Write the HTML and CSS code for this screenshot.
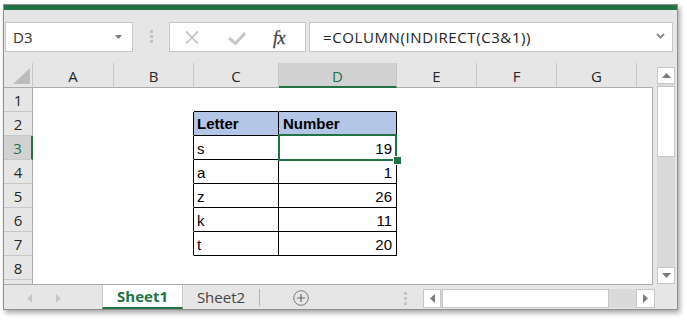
FILE: index.html
```html
<!DOCTYPE html>
<html>
<head>
<meta charset="utf-8">
<title>Excel COLUMN INDIRECT</title>
<link rel="stylesheet" href="styles.css">
</head>
<body>
<div class="window">
  <div class="topbar"></div>
  <div class="fbar">
    <div class="namebox">
      <span class="nb-text">D3</span>
      <svg class="nb-arrow" width="7" height="4" viewBox="0 0 7 4"><path d="M0 0H7L3.5 4Z" fill="#7a7a7a"/></svg>
    </div>
    <div class="grip"><i></i><i></i><i></i></div>
    <div class="fxbtns">
      <svg class="ic-x" width="14" height="13" viewBox="0 0 14 13"><path d="M1 0.5L13 12.5M13 0.5L1 12.5" stroke="#bdbdbd" stroke-width="1.6" fill="none"/></svg>
      <svg class="ic-check" width="18" height="13" viewBox="0 0 18 13"><path d="M1 6L7.5 11.5L17 1" stroke="#c8c8c8" stroke-width="3" fill="none"/></svg>
      <span class="fx">fx</span>
    </div>
    <div class="finput">
      <span class="ftext">=COLUMN(INDIRECT(C3&amp;1))</span>
      <svg class="f-chev" width="9" height="6" viewBox="0 0 9 6"><path d="M1 1L4.5 4.5L8 1" stroke="#8a8a8a" stroke-width="2" fill="none"/></svg>
    </div>
  </div>

  <div class="sheet">
    <div class="grid">
      <div class="colhead">
        <div class="corner"><svg width="17" height="16" viewBox="0 0 17 16"><path d="M0 16H17V0Z" fill="#bcbcbc"/></svg></div>
        <div>A</div><div>B</div><div>C</div><div class="csel">D</div><div>E</div><div>F</div><div>G</div><div class="last"></div>
      </div>
      <div class="body">
        <!-- row 1 -->
        <div class="c rh">1</div><div class="c"></div><div class="c"></div><div class="c tb"></div><div class="c tb"></div><div class="c"></div><div class="c"></div><div class="c"></div><div class="c"></div>
        <!-- row 2 -->
        <div class="c rh">2</div><div class="c"></div><div class="c tl"></div><div class="c tc th">Letter</div><div class="c tc th thd">Number</div><div class="c"></div><div class="c"></div><div class="c"></div><div class="c"></div>
        <!-- row 3 -->
        <div class="c rh rsel">3</div><div class="c"></div><div class="c tl"></div><div class="c tc lt">s</div><div class="c tc num sel">19</div><div class="c"></div><div class="c"></div><div class="c"></div><div class="c"></div>
        <!-- row 4 -->
        <div class="c rh">4</div><div class="c"></div><div class="c tl"></div><div class="c tc lt">a</div><div class="c tc num">1</div><div class="c"></div><div class="c"></div><div class="c"></div><div class="c"></div>
        <!-- row 5 -->
        <div class="c rh">5</div><div class="c"></div><div class="c tl"></div><div class="c tc lt">z</div><div class="c tc num">26</div><div class="c"></div><div class="c"></div><div class="c"></div><div class="c"></div>
        <!-- row 6 -->
        <div class="c rh">6</div><div class="c"></div><div class="c tl"></div><div class="c tc lt">k</div><div class="c tc num">11</div><div class="c"></div><div class="c"></div><div class="c"></div><div class="c"></div>
        <!-- row 7 -->
        <div class="c rh">7</div><div class="c"></div><div class="c tl"></div><div class="c tc lt">t</div><div class="c tc num">20</div><div class="c"></div><div class="c"></div><div class="c"></div><div class="c"></div>
        <!-- row 8 -->
        <div class="c rh">8</div><div class="c"></div><div class="c"></div><div class="c"></div><div class="c"></div><div class="c"></div><div class="c"></div><div class="c"></div><div class="c"></div>
        <!-- row 9 (partial) -->
        <div class="c rh part"></div><div class="c part"></div><div class="c part"></div><div class="c part"></div><div class="c part"></div><div class="c part"></div><div class="c part"></div><div class="c part"></div><div class="c part"></div>
      </div>
    </div>
    <div class="vscroll">
      <div class="vtrack">
        <div class="sbtn vbtn"><svg width="9" height="5" viewBox="0 0 9 5"><path d="M0 5H9L4.5 0Z" fill="#7a7a7a"/></svg></div>
        <div class="vthumb"></div>
        <div class="sbtn vbtn vdown"><svg width="9" height="5" viewBox="0 0 9 5"><path d="M0 0H9L4.5 5Z" fill="#7a7a7a"/></svg></div>
      </div>
    </div>
  </div>

  <div class="tabs">
    <div class="nav">
      <svg width="5" height="9" viewBox="0 0 5 9"><path d="M5 0V9L0 4.5Z" fill="#c6c6c6"/></svg>
      <svg class="nav-r" width="5" height="9" viewBox="0 0 5 9"><path d="M0 0V9L5 4.5Z" fill="#c6c6c6"/></svg>
    </div>
    <div class="tab active">Sheet1</div>
    <div class="tab">Sheet2</div>
    <div class="tsep"></div>
    <svg class="plus" width="16" height="16" viewBox="0 0 16 16"><circle cx="8" cy="8" r="7.3" stroke="#7a7a7a" stroke-width="1" fill="none"/><path d="M4 8H12M8 4V12" stroke="#6a6a6a" stroke-width="1.2"/></svg>
    <div class="hgrip"><i></i><i></i><i></i></div>
    <div class="htrack">
      <div class="sbtn hbtn"><svg width="5" height="9" viewBox="0 0 5 9"><path d="M5 0V9L0 4.5Z" fill="#7a7a7a"/></svg></div>
      <div class="hthumb"></div>
      <div class="sbtn hbtn hright"><svg width="5" height="9" viewBox="0 0 5 9"><path d="M0 0V9L5 4.5Z" fill="#7a7a7a"/></svg></div>
    </div>
  </div>
</div>
</body>
</html>
```

FILE: styles.css
```css
* { box-sizing: border-box; }
html, body { margin: 0; padding: 0; background: #ffffff; }
body {
  width: 687px;
  height: 321px;
  overflow: hidden;
  font-family: "Open Sans", "Noto Sans", sans-serif;
}

.window {
  margin: 4px 0 0 3px;
  width: 675px;
  height: 306px;
  border: 1px solid #8f8f8f;
  background: #e6e6e6;
  box-shadow: 2px 3px 5px rgba(0, 0, 0, 0.35);
  display: flex;
  flex-direction: column;
}

.topbar { height: 5px; background: #217346; flex: none; }

/* formula bar */
.fbar {
  height: 53px;
  flex: none;
  display: flex;
  align-items: flex-start;
  padding: 12px 0 0 1px;
}
.namebox {
  width: 128px;
  height: 30px;
  background: #fff;
  border: 1px solid #c6c6c6;
  display: flex;
  align-items: center;
  padding-left: 7px;
}
.nb-text { font-size: 15px; color: #333; }
.nb-arrow { margin-left: auto; margin-right: 10px; }

.grip {
  width: 36px;
  display: flex;
  flex-direction: column;
  align-items: center;
  gap: 2px;
  padding-top: 8px;
}
.grip i, .hgrip i { display: block; width: 3px; height: 3px; background: #c4c4c4; }

.fxbtns {
  width: 137px;
  height: 30px;
  background: #fff;
  border: 1px solid #c6c6c6;
  display: flex;
  align-items: center;
  padding-left: 15px;
}
.ic-x { margin-top: 1px; }
.ic-check { margin-left: 29px; margin-top: 3px; }
.fx {
  margin-left: 27px;
  font-family: "Liberation Serif", serif;
  font-style: italic;
  font-size: 18px;
  color: #444;
  padding-top: 2px;
  letter-spacing: -0.5px;
  -webkit-text-stroke: 0.3px #444;
}

.finput {
  width: 364px;
  height: 30px;
  margin-left: 3px;
  background: #fff;
  border: 1px solid #c6c6c6;
  display: flex;
  align-items: center;
  padding-left: 13px;
}
.ftext { font-size: 15px; letter-spacing: 0.6px; color: #222; white-space: nowrap; }
.f-chev { margin-left: auto; margin-right: 7px; margin-top: -2px; }

/* sheet */
.sheet { height: 222px; flex: none; display: flex; }
.grid { width: 649px; }

.colhead {
  display: grid;
  grid-template-columns: 29px 81px 80px 85px 118px 80px 80px 80px 16px;
  height: 25px;
}
.colhead > div {
  border-bottom: 1px solid #ababab;
  border-right: 1px solid #c8c8c8;
  display: flex;
  justify-content: center;
  align-items: center;
  padding-top: 2px;
  font-size: 15px;
  color: #262626;
}
.colhead > .last { border-right: none; }
.colhead > .corner { justify-content: flex-start; align-items: flex-start; padding: 5px 0 0 9px; }
.colhead > .csel {
  background: #d2d2d2;
  color: #217346;
  border-bottom: 2px solid #217346;
}

.body {
  display: grid;
  grid-template-columns: 29px 81px 80px 85px 118px 80px 80px 80px 15px;
  grid-template-rows: repeat(8, 24px) 4px;
  height: 197px;
  background: #fff;
  border-right: 1px solid #ababab;
  border-bottom: 1px solid #ababab;
}
.c {
  border-right: 1px solid transparent;
  border-bottom: 1px solid transparent;
  display: flex;
  align-items: flex-end;
  padding-bottom: 3px;
  font-family: "Liberation Sans", Arial, sans-serif;
  font-size: 15px;
  line-height: 1;
  color: #000;
}
.c.part { padding: 0; border-bottom: none; }
.rh {
  background: #e6e6e6;
  border-right-color: #ababab;
  border-bottom-color: #c8c8c8;
  justify-content: center;
  align-items: center;
  padding: 1px 0 0 0;
  font-family: "Open Sans", "Noto Sans", sans-serif;
  font-size: 15px;
  color: #262626;
}
.rh.rsel {
  background: #d2d2d2;
  color: #217346;
  border-right: 2px solid #217346;
}

/* table */
.tb { border-bottom-color: #000; }
.tl { border-right-color: #000; }
.tc { border-right-color: #000; border-bottom-color: #000; }
.th {
  background: #b4c6e7;
  font-weight: 700;
  padding-left: 3px;
  padding-bottom: 4px;
}
.th.thd { padding-left: 4px; }
.lt { padding-left: 3px; }
.num { justify-content: flex-end; padding-right: 4px; }

.sel { position: relative; }
.sel::before {
  content: "";
  position: absolute;
  left: -1px;
  top: -2px;
  right: -1px;
  bottom: -2px;
  border: 2px solid #217346;
}
.sel::after {
  content: "";
  position: absolute;
  left: 114px;
  top: 20px;
  width: 7px;
  height: 7px;
  background: #217346;
  border: 1px solid #fff;
}

/* vertical scrollbar */
.vscroll { width: 24px; padding: 4px 0 0 4px; }
.vtrack {
  width: 18px;
  height: 217px;
  background: #dadada;
  display: flex;
  flex-direction: column;
}
.sbtn {
  background: #fff;
  border: 1px solid #c6c6c6;
  display: flex;
  align-items: center;
  justify-content: center;
  flex: none;
}
.vbtn { height: 17px; }
.vdown { margin-top: auto; }
.vthumb {
  margin-top: 2px;
  height: 71px;
  background: #fff;
  border: 1px solid #c6c6c6;
}

/* tab bar */
.tabs { height: 24px; flex: none; display: flex; align-items: stretch; }
.nav {
  width: 98px;
  display: flex;
  align-items: center;
  padding-left: 23px;
  padding-top: 2px;
}
.nav-r { margin-left: 24px; }
.tab {
  width: 76px;
  display: flex;
  align-items: center;
  justify-content: center;
  font-size: 15px;
  color: #444;
  padding-bottom: 1px;
}
.tab.active {
  width: 81px;
  background: #fff;
  border-left: 1px solid #c6c6c6;
  border-right: 1px solid #c6c6c6;
  border-bottom: 2px solid #217346;
  font-weight: 700;
  color: #217346;
  padding-bottom: 0;
}
.tsep { width: 1px; height: 17px; margin-top: 4px; background: #b4b4b4; }
.plus { margin-left: 33px; align-self: center; margin-top: 2px; }
.hgrip {
  margin-left: 95px;
  display: flex;
  flex-direction: column;
  gap: 2px;
  padding-top: 7px;
}
.htrack {
  margin-left: 16px;
  margin-top: 4px;
  width: 232px;
  height: 19px;
  background: #dadada;
  display: flex;
}
.hbtn { width: 18px; height: 19px; }
.hright { width: 19px; margin-left: auto; }
.hthumb {
  margin-left: 1px;
  width: 167px;
  height: 19px;
  background: #fff;
  border: 1px solid #c6c6c6;
}
```
